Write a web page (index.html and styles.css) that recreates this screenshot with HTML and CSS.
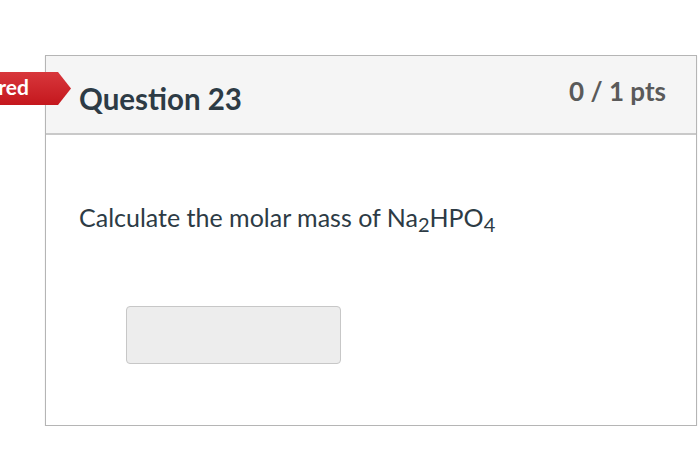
FILE: index.html
```html
<!DOCTYPE html>
<html>
<head>
<meta charset="utf-8">
<link rel="stylesheet" href="styles.css">
</head>
<body>
<div class="card">
  <div class="badge"><span class="badge-text">red</span></div>
  <div class="header">
    <h2 class="title">Question 23</h2>
    <div class="pts">0 / 1 pts</div>
  </div>
  <div class="content">
    <p class="question">Calculate the molar mass of Na<sub>2</sub>HPO<sub>4</sub></p>
    <div class="answer"></div>
  </div>
</div>
</body>
</html>
```
FILE: styles.css
```css
html, body {
  margin: 0;
  padding: 0;
  background: #fff;
  font-family: Lato, "Open Sans", sans-serif;
}
.card {
  position: relative;
  margin: 55px 0 0 45px;
  width: 650px;
  height: 369px;
  border: 1px solid #b5b5b5;
  box-shadow: 0 1px 1px rgba(0,0,0,0.15);
  background: #fff;
}
.header {
  display: flex;
  justify-content: space-between;
  align-items: flex-start;
  height: 77px;
  background: #f5f5f5;
  border-bottom: 2px solid #c9c9c9;
  padding: 0 30px 0 33px;
}
.title {
  margin: 26px 0 0 0;
  font-size: 29.5px;
  font-weight: 700;
  color: #2d3b45;
  line-height: 34px;
}
.pts {
  margin-top: 20px;
  font-size: 26px;
  font-weight: 700;
  color: #5a5a5a;
  line-height: 30px;
}
.badge {
  position: absolute;
  left: -46px;
  top: 16px;
  width: 71px;
  height: 33px;
  background: linear-gradient(#d8373c, #c4171d);
  clip-path: polygon(0 0, 58px 0, 71px 50%, 58px 100%, 0 100%);
  display: flex;
  align-items: center;
  justify-content: flex-end;
  overflow: hidden;
}
.badge-text {
  margin-right: 42px;
  color: #fff;
  font-weight: 700;
  font-size: 21px;
  line-height: 1;
  margin-top: -4px;
  white-space: nowrap;
}
.content {
  padding: 0 0 0 33px;
}
.question {
  margin: 67px 0 0 0;
  font-size: 25px;
  color: #2d3b45;
  line-height: 30px;
}
.question sub {
  font-size: 0.8em;
  vertical-align: -0.25em;
  line-height: 0;
}
.answer {
  margin: 74px 0 0 47px;
  width: 213px;
  height: 56px;
  background: #ededed;
  border: 1px solid #c7c7c7;
  border-radius: 4px;
}
```
